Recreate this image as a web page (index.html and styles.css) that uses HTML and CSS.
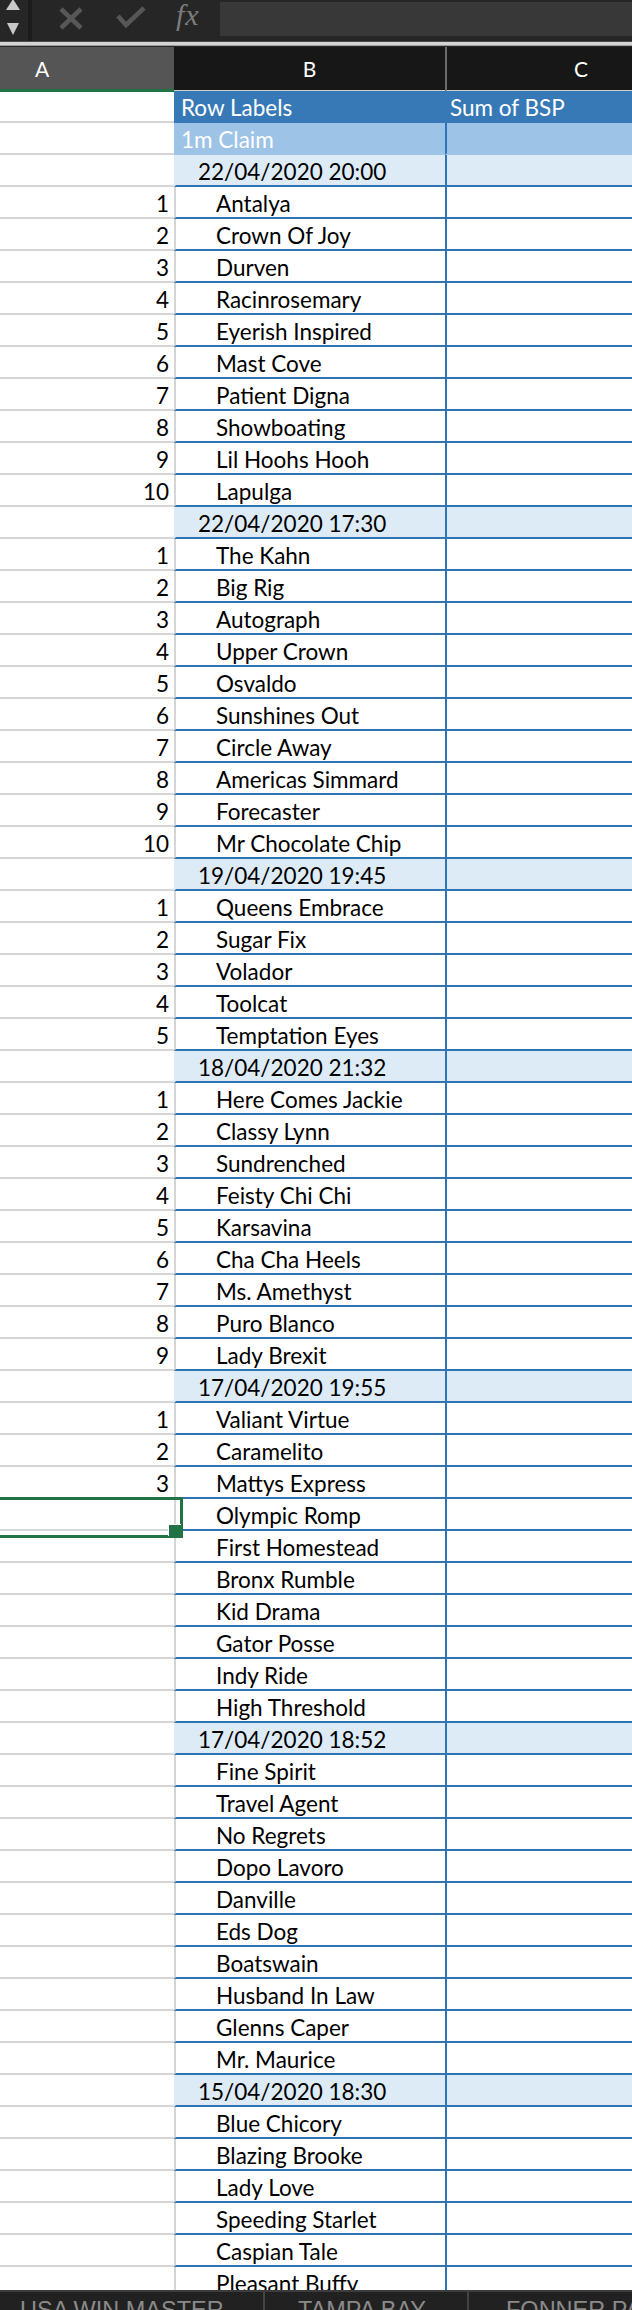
FILE: index.html
```html
<!DOCTYPE html>
<html>
<head>
<meta charset="utf-8">
<link rel="stylesheet" href="styles.css">
</head>
<body>
<div class="formula-bar">
  <div class="nav">
    <svg width="28" height="41" viewBox="0 0 28 41"><polygon points="6,10 20,10 13,-1" fill="#c9c9c9"/><polygon points="7,23 19,23 13,35" fill="#c9c9c9"/></svg>
  </div>
  <div class="divider"></div>
  <div class="tools">
    <svg class="ico-x" width="26" height="41" viewBox="0 0 26 41"><path d="M3 9 L23 28 M23 9 L3 28" stroke="#575757" stroke-width="4.5" fill="none"/></svg>
    <svg class="ico-ok" width="32" height="41" viewBox="0 0 32 41"><path d="M3 16 L11 25 L29 8" stroke="#575757" stroke-width="4.5" fill="none"/></svg>
    <span class="fx">fx</span>
  </div>
  <div class="input"></div>
</div>
<div class="sep"></div>
<div class="col-heads">
  <div class="ch ch-a">A</div>
  <div class="ch ch-b">B</div>
  <div class="ch ch-c">C</div>
</div>
<div class="sheet">
  <div class="row hdr"><div class="a"></div><div class="b l0">Row Labels</div><div class="c">Sum of BSP</div></div>
  <div class="row grp"><div class="a"></div><div class="b l0">1m Claim</div><div class="c"></div></div>

  <div class="row date"><div class="a"></div><div class="b l1">22/04/2020 20:00</div><div class="c"></div></div>
  <div class="row item"><div class="a">1</div><div class="b l2">Antalya</div><div class="c"></div></div>
  <div class="row item"><div class="a">2</div><div class="b l2">Crown Of Joy</div><div class="c"></div></div>
  <div class="row item"><div class="a">3</div><div class="b l2">Durven</div><div class="c"></div></div>
  <div class="row item"><div class="a">4</div><div class="b l2">Racinrosemary</div><div class="c"></div></div>
  <div class="row item"><div class="a">5</div><div class="b l2">Eyerish Inspired</div><div class="c"></div></div>
  <div class="row item"><div class="a">6</div><div class="b l2">Mast Cove</div><div class="c"></div></div>
  <div class="row item"><div class="a">7</div><div class="b l2">Patient Digna</div><div class="c"></div></div>
  <div class="row item"><div class="a">8</div><div class="b l2">Showboating</div><div class="c"></div></div>
  <div class="row item"><div class="a">9</div><div class="b l2">Lil Hoohs Hooh</div><div class="c"></div></div>
  <div class="row item"><div class="a">10</div><div class="b l2">Lapulga</div><div class="c"></div></div>

  <div class="row date"><div class="a"></div><div class="b l1">22/04/2020 17:30</div><div class="c"></div></div>
  <div class="row item"><div class="a">1</div><div class="b l2">The Kahn</div><div class="c"></div></div>
  <div class="row item"><div class="a">2</div><div class="b l2">Big Rig</div><div class="c"></div></div>
  <div class="row item"><div class="a">3</div><div class="b l2">Autograph</div><div class="c"></div></div>
  <div class="row item"><div class="a">4</div><div class="b l2">Upper Crown</div><div class="c"></div></div>
  <div class="row item"><div class="a">5</div><div class="b l2">Osvaldo</div><div class="c"></div></div>
  <div class="row item"><div class="a">6</div><div class="b l2">Sunshines Out</div><div class="c"></div></div>
  <div class="row item"><div class="a">7</div><div class="b l2">Circle Away</div><div class="c"></div></div>
  <div class="row item"><div class="a">8</div><div class="b l2">Americas Simmard</div><div class="c"></div></div>
  <div class="row item"><div class="a">9</div><div class="b l2">Forecaster</div><div class="c"></div></div>
  <div class="row item"><div class="a">10</div><div class="b l2">Mr Chocolate Chip</div><div class="c"></div></div>

  <div class="row date"><div class="a"></div><div class="b l1">19/04/2020 19:45</div><div class="c"></div></div>
  <div class="row item"><div class="a">1</div><div class="b l2">Queens Embrace</div><div class="c"></div></div>
  <div class="row item"><div class="a">2</div><div class="b l2">Sugar Fix</div><div class="c"></div></div>
  <div class="row item"><div class="a">3</div><div class="b l2">Volador</div><div class="c"></div></div>
  <div class="row item"><div class="a">4</div><div class="b l2">Toolcat</div><div class="c"></div></div>
  <div class="row item"><div class="a">5</div><div class="b l2">Temptation Eyes</div><div class="c"></div></div>

  <div class="row date"><div class="a"></div><div class="b l1">18/04/2020 21:32</div><div class="c"></div></div>
  <div class="row item"><div class="a">1</div><div class="b l2">Here Comes Jackie</div><div class="c"></div></div>
  <div class="row item"><div class="a">2</div><div class="b l2">Classy Lynn</div><div class="c"></div></div>
  <div class="row item"><div class="a">3</div><div class="b l2">Sundrenched</div><div class="c"></div></div>
  <div class="row item"><div class="a">4</div><div class="b l2">Feisty Chi Chi</div><div class="c"></div></div>
  <div class="row item"><div class="a">5</div><div class="b l2">Karsavina</div><div class="c"></div></div>
  <div class="row item"><div class="a">6</div><div class="b l2">Cha Cha Heels</div><div class="c"></div></div>
  <div class="row item"><div class="a">7</div><div class="b l2">Ms. Amethyst</div><div class="c"></div></div>
  <div class="row item"><div class="a">8</div><div class="b l2">Puro Blanco</div><div class="c"></div></div>
  <div class="row item"><div class="a">9</div><div class="b l2">Lady Brexit</div><div class="c"></div></div>

  <div class="row date"><div class="a"></div><div class="b l1">17/04/2020 19:55</div><div class="c"></div></div>
  <div class="row item"><div class="a">1</div><div class="b l2">Valiant Virtue</div><div class="c"></div></div>
  <div class="row item"><div class="a">2</div><div class="b l2">Caramelito</div><div class="c"></div></div>
  <div class="row item"><div class="a">3</div><div class="b l2">Mattys Express</div><div class="c"></div></div>
  <div class="row item"><div class="a sel"></div><div class="b l2">Olympic Romp</div><div class="c"></div></div>
  <div class="row item"><div class="a"></div><div class="b l2">First Homestead</div><div class="c"></div></div>
  <div class="row item"><div class="a"></div><div class="b l2">Bronx Rumble</div><div class="c"></div></div>
  <div class="row item"><div class="a"></div><div class="b l2">Kid Drama</div><div class="c"></div></div>
  <div class="row item"><div class="a"></div><div class="b l2">Gator Posse</div><div class="c"></div></div>
  <div class="row item"><div class="a"></div><div class="b l2">Indy Ride</div><div class="c"></div></div>
  <div class="row item"><div class="a"></div><div class="b l2">High Threshold</div><div class="c"></div></div>

  <div class="row date"><div class="a"></div><div class="b l1">17/04/2020 18:52</div><div class="c"></div></div>
  <div class="row item"><div class="a"></div><div class="b l2">Fine Spirit</div><div class="c"></div></div>
  <div class="row item"><div class="a"></div><div class="b l2">Travel Agent</div><div class="c"></div></div>
  <div class="row item"><div class="a"></div><div class="b l2">No Regrets</div><div class="c"></div></div>
  <div class="row item"><div class="a"></div><div class="b l2">Dopo Lavoro</div><div class="c"></div></div>
  <div class="row item"><div class="a"></div><div class="b l2">Danville</div><div class="c"></div></div>
  <div class="row item"><div class="a"></div><div class="b l2">Eds Dog</div><div class="c"></div></div>
  <div class="row item"><div class="a"></div><div class="b l2">Boatswain</div><div class="c"></div></div>
  <div class="row item"><div class="a"></div><div class="b l2">Husband In Law</div><div class="c"></div></div>
  <div class="row item"><div class="a"></div><div class="b l2">Glenns Caper</div><div class="c"></div></div>
  <div class="row item"><div class="a"></div><div class="b l2">Mr. Maurice</div><div class="c"></div></div>

  <div class="row date"><div class="a"></div><div class="b l1">15/04/2020 18:30</div><div class="c"></div></div>
  <div class="row item"><div class="a"></div><div class="b l2">Blue Chicory</div><div class="c"></div></div>
  <div class="row item"><div class="a"></div><div class="b l2">Blazing Brooke</div><div class="c"></div></div>
  <div class="row item"><div class="a"></div><div class="b l2">Lady Love</div><div class="c"></div></div>
  <div class="row item"><div class="a"></div><div class="b l2">Speeding Starlet</div><div class="c"></div></div>
  <div class="row item"><div class="a"></div><div class="b l2">Caspian Tale</div><div class="c"></div></div>
  <div class="row item"><div class="a"></div><div class="b l2">Pleasant Buffy</div><div class="c"></div></div>
</div>
<div class="tabs">
  <div class="tab t1">USA WIN MASTER</div>
  <div class="tab t2">TAMPA BAY</div>
  <div class="tab t3">FONNER PARK</div>
</div>
</body>
</html>
```
FILE: styles.css
```css
* {
  box-sizing: border-box;
  margin: 0;
  padding: 0;
}

html, body {
  width: 632px;
  height: 2310px;
  overflow: hidden;
}

body {
  background: #ffffff;
  font-family: Lato, "Liberation Sans", sans-serif;
  color: #000;
}

/* formula bar */
.formula-bar {
  height: 41px;
  background: #262626;
  display: flex;
}

.nav {
  width: 28px;
  height: 41px;
}

.nav svg, .tools svg {
  display: block;
}

.divider {
  width: 4px;
  background: #1b1b1b;
}

.tools {
  width: 188px;
  display: flex;
  align-items: flex-start;
}

.ico-x {
  margin-left: 26px;
}

.ico-ok {
  margin-left: 31px;
}

.fx {
  margin-left: 29px;
  font-family: "Liberation Serif", serif;
  font-style: italic;
  font-size: 30px;
  line-height: 30px;
  color: #7c7c7c;
  letter-spacing: 1px;
}

.input {
  flex: 1;
  margin: 2px 0 5px;
  background: #383838;
}

.sep {
  height: 6px;
  background: linear-gradient(#4a4a4a 0, #4a4a4a 1px, #d4d4d4 1px, #d4d4d4 4px, #9a9a9a 4px, #9a9a9a 5px, #2a2a2a 5px);
}

/* column headers */
.col-heads {
  display: grid;
  grid-template-columns: 174px 271px 1fr;
  height: 44px;
  background: #171717;
}

.ch {
  color: #ffffff;
  font-size: 21px;
  line-height: 40px;
  padding-top: 2px;
  border-bottom: 2px solid #cfcfcf;
}

.ch-a {
  background: #555555;
  border-bottom: 3px solid #217346;
  padding-left: 35px;
}

.ch-b {
  text-align: center;
}

.ch-c {
  border-left: 2px solid #6a6a6a;
  padding-left: 127px;
}

/* sheet */
.sheet {
  height: 2199px;
  overflow: hidden;
}

.row {
  display: grid;
  grid-template-columns: 174px 271px 1fr;
  height: 32px;
}

.row > div {
  height: 32px;
  font-size: 22.5px;
  line-height: 27px;
  padding-top: 3px;
  white-space: nowrap;
  overflow: hidden;
  border-bottom: 2px solid #2f75b5;
}

.row > .a {
  text-align: right;
  padding-right: 5px;
  border-bottom-color: #d5d5d5;
  overflow: visible;
}

.row > .b {
  border-left: 2px solid transparent;
}

.row > .c {
  border-left: 2px solid #2f75b5;
  padding-left: 3px;
}

.l0 { padding-left: 5px; }
.l1 { padding-left: 22px; }
.l2 { padding-left: 40px; }

.hdr > .b, .hdr > .c {
  background: #3779b6;
  color: #ffffff;
  border-bottom-color: #3779b6;
  border-left-color: transparent;
}

.grp > .b, .grp > .c {
  background: #9dc3e6;
  color: #ffffff;
  border-bottom-color: #9dc3e6;
}

.date > .b, .date > .c {
  background: #ddebf7;
}

.item > .b {
  border-left-color: #d5d5d5;
}

/* selected cell */
.a.sel {
  position: relative;
}

.a.sel::before {
  content: "";
  position: absolute;
  top: -2px;
  left: -4px;
  width: 181px;
  height: 35px;
  border: 3px solid #217346;
  z-index: 2;
}

.a.sel::after {
  content: "";
  position: absolute;
  left: 168px;
  top: 25px;
  width: 12px;
  height: 11px;
  background: #217346;
  border-left: 1px solid #ffffff;
  border-top: 1px solid #ffffff;
  z-index: 3;
}

/* sheet tabs */
.tabs {
  height: 40px;
  background: #212121;
  border-top: 2px solid #3c3c3c;
  display: flex;
}

.tab {
  font-family: "Liberation Sans", Arial, sans-serif;
  font-size: 23.5px;
  line-height: 23.5px;
  padding-top: 7px;
  color: #8a8a8a;
  white-space: nowrap;
  overflow: hidden;
}

.t1 {
  width: 265px;
  padding-left: 20px;
  border-right: 2px solid #444444;
}

.t2 {
  width: 204px;
  padding-left: 33px;
  border-right: 2px solid #444444;
}

.t3 {
  flex: 1;
  padding-left: 37px;
}
```
